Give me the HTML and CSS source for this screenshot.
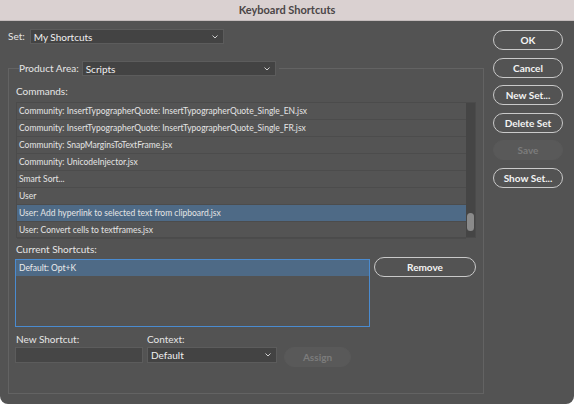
FILE: index.html
```html
<!DOCTYPE html>
<html lang="en">

<head>
    <meta charset="UTF-8" />
    <title>Keyboard Shortcuts</title>
    <link rel="stylesheet" href="styles.css">
</head>

<body>
    <div class="dialog">
        <div class="titlebar">Keyboard Shortcuts</div>

        <div class="content">
            <div class="main">
                <div class="set-row">
                    <span class="label">Set:</span>
                    <div class="select set-select">
                        <span>My Shortcuts</span>
                        <svg class="chev" width="6" height="4" viewBox="0 0 6 4"><polyline points="0.5,0.5 3,3 5.5,0.5" /></svg>
                    </div>
                </div>

                <fieldset class="group">
                    <legend class="area">
                        <span class="label">Product Area:</span>
                        <div class="select area-select">
                            <span>Scripts</span>
                            <svg class="chev" width="6" height="4" viewBox="0 0 6 4"><polyline points="0.5,0.5 3,3 5.5,0.5" /></svg>
                        </div>
                    </legend>

                    <div class="label commands-label">Commands:</div>
                    <div class="list-wrap">
                        <ul class="list">
                            <li>Community: InsertTypographerQuote: InsertTypographerQuote_Single_EN.jsx</li>
                            <li>Community: InsertTypographerQuote: InsertTypographerQuote_Single_FR.jsx</li>
                            <li>Community: SnapMarginsToTextFrame.jsx</li>
                            <li>Community: UnicodeInjector.jsx</li>
                            <li>Smart Sort...</li>
                            <li>User</li>
                            <li class="selected">User: Add hyperlink to selected text from clipboard.jsx</li>
                            <li>User: Convert cells to textframes.jsx</li>
                        </ul>
                        <div class="scrollbar">
                            <div class="thumb"></div>
                        </div>
                    </div>

                    <div class="label shortcuts-label">Current Shortcuts:</div>
                    <div class="shortcuts-row">
                        <div class="shortcuts-box">
                            <div class="shortcut selected">Default: Opt+K</div>
                        </div>
                        <button class="btn remove-btn">Remove</button>
                    </div>

                    <div class="new-row">
                        <div class="field">
                            <span class="label">New Shortcut:</span>
                            <div class="input"></div>
                        </div>
                        <div class="field">
                            <span class="label">Context:</span>
                            <div class="select context-select">
                                <span>Default</span>
                                <svg class="chev" width="6" height="4" viewBox="0 0 6 4"><polyline points="0.5,0.5 3,3 5.5,0.5" /></svg>
                            </div>
                        </div>
                        <button class="btn assign-btn" disabled>Assign</button>
                    </div>
                </fieldset>
            </div>

            <div class="side">
                <button class="btn">OK</button>
                <button class="btn">Cancel</button>
                <button class="btn">New Set...</button>
                <button class="btn">Delete Set</button>
                <button class="btn" disabled>Save</button>
                <button class="btn">Show Set...</button>
            </div>
        </div>
    </div>
</body>

</html>
```

FILE: styles.css
```css
/* General Reset */
* {
    margin: 0;
    padding: 0;
    box-sizing: border-box;
}

html {
    background: #fff;
}

body {
    font-family: "Lato", "Liberation Sans", sans-serif;
    color: #e8e8e8;
}

.dialog {
    width: 574px;
    height: 404px;
    background: #535353;
    border-radius: 0 0 8px 8px;
    overflow: hidden;
}

.titlebar {
    height: 21px;
    background: #dad1d1;
    border-bottom: 1px solid #c4bcbc;
    color: #4a4546;
    font-size: 11px;
    font-weight: bold;
    line-height: 20px;
    text-align: center;
}

.content {
    display: flex;
    gap: 10px;
    padding: 8px 11px 0 8px;
}

.main {
    width: 475px;
}

.label {
    font-size: 10px;
    line-height: 13px;
    color: #e6e6e6;
    white-space: nowrap;
}

/* Selects */
.set-row,
.area {
    display: flex;
    align-items: center;
    gap: 3px;
}

.select {
    display: flex;
    align-items: center;
    justify-content: space-between;
    height: 15px;
    padding: 0 5px 0 3px;
    background: #434343;
    border: 1px solid #5c5c5c;
    font-size: 10px;
    color: #f0f0f0;
}

.chev {
    fill: none;
    stroke: #cfcfcf;
    stroke-width: 1;
}

.set-select {
    width: 194px;
    margin-left: 2px;
}

/* Group */
.group {
    margin-top: 17px;
    border: 1px solid #636363;
    padding: 0 7px 30px 7px;
}

.area {
    margin-left: 3px;
    padding-right: 3px;
}

.area-select {
    width: 194px;
}

.commands-label {
    margin-top: 9px;
}

.list-wrap {
    display: flex;
    margin-top: 4px;
    height: 136px;
    background: #545454;
    border: 1px solid #4b4b4b;
}

.list {
    flex: 1;
    list-style: none;
}

.list li {
    height: 17px;
    line-height: 16px;
    padding-left: 2px;
    font-size: 8.5px;
    color: #e4e4e4;
    border-bottom: 1px solid #4c4c4c;
    white-space: nowrap;
    overflow: hidden;
}

.list li.selected,
.shortcut.selected {
    background: #4e6a86;
}

.scrollbar {
    width: 9px;
    display: flex;
    flex-direction: column;
    justify-content: flex-end;
    padding: 0 1px 6px 1px;
    background: #454545;
}

.thumb {
    height: 18px;
    border-radius: 4px;
    background: #8a8a8a;
}

.shortcuts-label {
    margin-top: 5px;
}

.shortcuts-row {
    display: flex;
    align-items: flex-start;
    gap: 4px;
    margin-top: 3px;
}

.shortcuts-box {
    width: 355px;
    height: 68px;
    border: 1px solid #4a8bd0;
    margin-left: -1px;
}

.shortcut {
    height: 16px;
    line-height: 16px;
    padding-left: 3px;
    font-size: 8.5px;
    color: #ececec;
}

/* Buttons */
.btn {
    height: 20px;
    background: #535353;
    border: 1.5px solid #c9c9c9;
    border-radius: 10px;
    font-family: "Lato", "Liberation Sans", sans-serif;
    font-size: 10px;
    font-weight: bold;
    color: #f4f4f4;
}

.btn:disabled {
    background: #595959;
    border-color: #595959;
    color: #7c7c7c;
}

.remove-btn {
    width: 102px;
    margin-top: -2px;
}

.new-row {
    display: flex;
    align-items: flex-end;
    margin-top: 6px;
}

.field {
    display: flex;
    flex-direction: column;
    gap: 1px;
}

.input {
    width: 128px;
    height: 16px;
    margin-left: -1px;
    background: #464646;
    border: 1px solid #5c5c5c;
}

.field + .field {
    margin-left: 4px;
}

.context-select {
    width: 130px;
    height: 16px;
}

.assign-btn {
    width: 67px;
    margin-left: 7px;
    margin-bottom: -4px;
}

.side {
    width: 70px;
    display: flex;
    flex-direction: column;
    gap: 7.5px;
    margin-top: 1px;
}
```
